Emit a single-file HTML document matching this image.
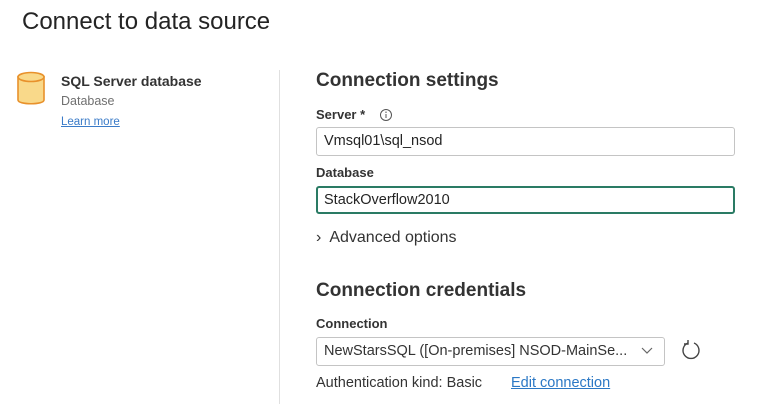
<!DOCTYPE html>
<html><head><style>
*{margin:0;padding:0;box-sizing:border-box}
body{width:768px;height:404px;background:#fff;font-family:"Liberation Sans",sans-serif;color:#242424;position:relative;overflow:hidden}
.a{position:absolute;white-space:nowrap}
.inp{position:absolute;border:1px solid #c4c4c4;border-radius:3px;font-size:14.5px;padding-left:7px;line-height:27px}
</style></head><body>
<div class="a" style="left:22px;top:8px;font-size:24px;color:#242424">Connect to data source</div>
<div class="a" style="left:279px;top:70px;width:1px;height:334px;background:#e0e0e0"></div>
<svg class="a" style="left:16px;top:70px" width="30" height="38" viewBox="0 0 30 38">
<path d="M2 7 V30 C2 35 28 35 28 30 V7 Z" fill="#f9d98a" stroke="#e8912b" stroke-width="1.6"/>
<ellipse cx="15" cy="7" rx="13" ry="4.5" fill="#f9d98a" stroke="#e8912b" stroke-width="1.6"/>
</svg>
<div class="a" style="left:61px;top:73px;font-size:14px;font-weight:bold;color:#333">SQL Server database</div>
<div class="a" style="left:61px;top:94px;font-size:12.5px;color:#707070">Database</div>
<div class="a" style="left:61px;top:116px;font-size:11.5px;color:#3a7bc8;text-decoration:underline">Learn more</div>

<div class="a" style="left:316px;top:70px;font-size:19px;font-weight:bold;color:#333">Connection settings</div>
<div class="a" style="left:316px;top:107px;font-size:13px;font-weight:bold;color:#333">Server *</div>
<svg class="a" style="left:379px;top:108px" width="14" height="14"><circle cx="7" cy="7" r="5.5" fill="none" stroke="#555" stroke-width="1"/><line x1="7" y1="6" x2="7" y2="10" stroke="#555"/><circle cx="7" cy="4.2" r=".7" fill="#555"/></svg>
<div class="inp" style="left:316px;top:127px;width:419px;height:29px">Vmsql01\sql_nsod</div>
<div class="a" style="left:316px;top:165px;font-size:13px;font-weight:bold;color:#333">Database</div>
<div class="inp" style="left:316px;top:186px;width:419px;height:28px;border:2px solid #2a7b64;line-height:24px;padding-left:6px">StackOverflow2010</div>
<div class="a" style="left:316px;top:229px;font-size:16px;color:#333">›&nbsp; Advanced options</div>

<div class="a" style="left:316px;top:280px;font-size:19px;font-weight:bold;color:#333">Connection credentials</div>
<div class="a" style="left:316px;top:316px;font-size:13px;font-weight:bold;color:#333">Connection</div>
<div class="inp" style="left:316px;top:337px;width:349px;height:29px;color:#333">NewStarsSQL ([On-premises] NSOD-MainSe...</div>
<svg class="a" style="left:640px;top:344px" width="14" height="12"><path d="M2 4 L7 9 L12 4" fill="none" stroke="#666" stroke-width="1.2"/></svg>
<svg class="a" style="left:680px;top:339px" width="22" height="22" viewBox="0 0 22 22"><path d="M8 4 A8 8 0 1 0 14 4" fill="none" stroke="#444" stroke-width="1.4"/><path d="M8 1 L8 5 L4 5" fill="none" stroke="#444" stroke-width="1.4"/></svg>
<div class="a" style="left:316px;top:375px;font-size:14.5px;color:#333">Authentication kind: Basic</div>
<div class="a" style="left:511px;top:375px;font-size:14.5px;color:#2b78c5;text-decoration:underline">Edit connection</div>
</body></html>
